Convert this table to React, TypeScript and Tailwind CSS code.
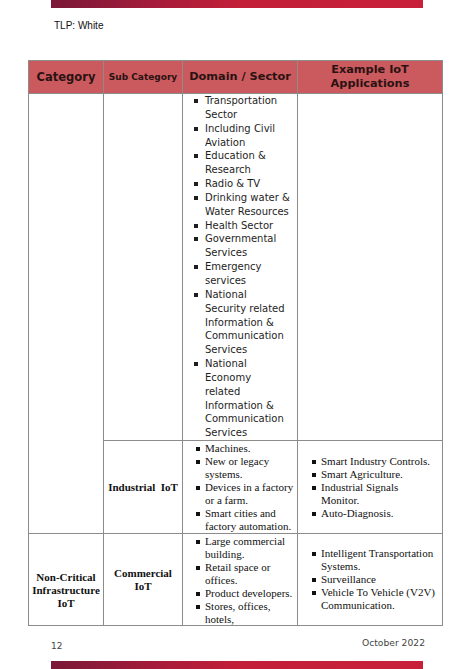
import React from "react";

const gothic = { fontFamily: '"DejaVu Sans", "Noto Sans", sans-serif' };
const serif = { fontFamily: '"Liberation Serif", "Times New Roman", serif' };

const domain1: string[][] = [
  ["Transportation", "Sector"],
  ["Including Civil", "Aviation"],
  ["Education &", "Research"],
  ["Radio & TV"],
  ["Drinking water &", "Water Resources"],
  ["Health Sector"],
  ["Governmental", "Services"],
  ["Emergency", "services"],
  ["National", "Security related", "Information &", "Communication", "Services"],
  ["National", "Economy", "related", "Information &", "Communication", "Services"],
];

const domain2: string[][] = [
  ["Machines."],
  ["New or legacy", "systems."],
  ["Devices in a factory", "or a farm."],
  ["Smart cities and", "factory automation."],
];

const apps2: string[][] = [
  ["Smart Industry Controls."],
  ["Smart Agriculture."],
  ["Industrial Signals", "Monitor."],
  ["Auto-Diagnosis."],
];

const domain3: string[][] = [
  ["Large commercial", "building."],
  ["Retail space or", "offices."],
  ["Product developers."],
  ["Stores, offices,", "hotels,"],
];

const apps3: string[][] = [
  ["Intelligent Transportation", "Systems."],
  ["Surveillance"],
  ["Vehicle To Vehicle (V2V)", "Communication."],
];

function GothicList({ items }: { items: string[][] }) {
  return (
    <div className="flex flex-col pl-[11px] text-[10px] leading-[13.85px] text-[#1e1e1e]" style={gothic}>
      {items.map((lines, i) => (
        <div key={i} className="flex items-start">
          <span className="mt-[5px] mr-[7px] h-[4px] w-[4px] shrink-0 bg-[#1e1e1e]" />
          <div className="flex flex-col">
            {lines.map((l, j) => (
              <span key={j} className="whitespace-nowrap">
                {l}
              </span>
            ))}
          </div>
        </div>
      ))}
    </div>
  );
}

function SerifList({
  items,
  leading,
  pl,
}: {
  items: string[][];
  leading: string;
  pl: string;
}) {
  return (
    <div className={`flex flex-col text-[11px] text-[#111] ${leading} ${pl}`} style={serif}>
      {items.map((lines, i) => (
        <div key={i} className="flex items-start">
          <span className="mt-[5px] mr-[5px] h-[4px] w-[4px] shrink-0 bg-[#111]" />
          <div className="flex flex-col">
            {lines.map((l, j) => (
              <span key={j} className="whitespace-nowrap">
                {l}
              </span>
            ))}
          </div>
        </div>
      ))}
    </div>
  );
}

export default function App() {
  const bd = "border border-[#8c8c8c]";
  return (
    <div className="relative h-[669px] w-[474px] overflow-hidden bg-white">
      <div className="ml-[51px] h-[8px] w-[372px] bg-[linear-gradient(90deg,#7a1838_0%,#a81c3a_30%,#c21f38_50%,#c8203a_100%)]" />
      <div
        className="ml-[54px] mt-[12px] text-[10px] leading-[12px] text-[#111]"
        style={{ fontFamily: '"Liberation Sans", Arial, sans-serif' }}
      >
        TLP: White
      </div>

      <table className="ml-[28px] mt-[28px] table-fixed border-collapse" style={{ width: 415 }}>
        <colgroup>
          <col style={{ width: 75 }} />
          <col style={{ width: 79 }} />
          <col style={{ width: 115 }} />
          <col style={{ width: 145 }} />
        </colgroup>
        <thead>
          <tr className="h-[33px] bg-[#cb5a5e] text-[#2a1212]" style={gothic}>
            <th className={`${bd} p-0 text-center align-middle text-[11.5px] font-bold leading-[14px]`}>
              Category
            </th>
            <th className={`${bd} p-0 text-center align-middle text-[9px] font-bold leading-[12px] whitespace-nowrap`}>
              Sub Category
            </th>
            <th className={`${bd} p-0 text-center align-middle text-[11.3px] font-bold leading-[14px] whitespace-nowrap`}>
              Domain / Sector
            </th>
            <th className={`${bd} p-0 text-center align-middle text-[11.3px] font-bold leading-[14px]`}>
              <div>Example IoT</div>
              <div>Applications</div>
            </th>
          </tr>
        </thead>
        <tbody>
          <tr className="h-[347px]">
            <td rowSpan={2} className={`${bd} p-0`} />
            <td className={`${bd} p-0`} />
            <td className={`${bd} p-0 align-top`}>
              <GothicList items={domain1} />
            </td>
            <td className={`${bd} p-0`} />
          </tr>
          <tr className="h-[92px]">
            <td
              className={`${bd} p-0 text-center align-middle text-[11px] font-bold leading-[13px] text-[#111] whitespace-pre`}
              style={serif}
            >
              {"Industrial  IoT"}
            </td>
            <td className={`${bd} p-0 align-top`}>
              <div className="pt-[1px]">
                <SerifList items={domain2} leading="leading-[13px]" pl="pl-[13px]" />
              </div>
            </td>
            <td className={`${bd} p-0 align-middle`}>
              <SerifList items={apps2} leading="leading-[13px]" pl="pl-[14px]" />
            </td>
          </tr>
          <tr className="h-[92px]">
            <td className={`${bd} p-0 align-top`}>
              <div
                className="flex flex-col items-center pt-[37px] text-[11px] font-bold leading-[13px] text-[#111]"
                style={serif}
              >
                <span>Non-Critical</span>
                <span>Infrastructure</span>
                <span>IoT</span>
              </div>
            </td>
            <td
              className={`${bd} p-0 text-center align-middle text-[11px] font-bold leading-[13px] text-[#111]`}
              style={serif}
            >
              <div>Commercial</div>
              <div>IoT</div>
            </td>
            <td className={`${bd} p-0 align-top`}>
              <div className="h-[91px] overflow-hidden pt-[1px]">
                <SerifList items={domain3} leading="leading-[12.9px]" pl="pl-[13px]" />
              </div>
            </td>
            <td className={`${bd} p-0 align-middle`}>
              <SerifList items={apps3} leading="leading-[13px]" pl="pl-[14px]" />
            </td>
          </tr>
        </tbody>
      </table>

      <div className="ml-[51px] mr-[49px] mt-[11px] flex items-start justify-between text-[#444]" style={gothic}>
        <span className="mt-[3px] text-[9px] leading-[12px]">12</span>
        <span className="text-[9.2px] leading-[12px]">October 2022</span>
      </div>
      <div className="absolute left-[51px] top-[661px] h-[8px] w-[372px] bg-[linear-gradient(90deg,#7a1838_0%,#a81c3a_30%,#c21f38_50%,#c8203a_100%)]" />
    </div>
  );
}
